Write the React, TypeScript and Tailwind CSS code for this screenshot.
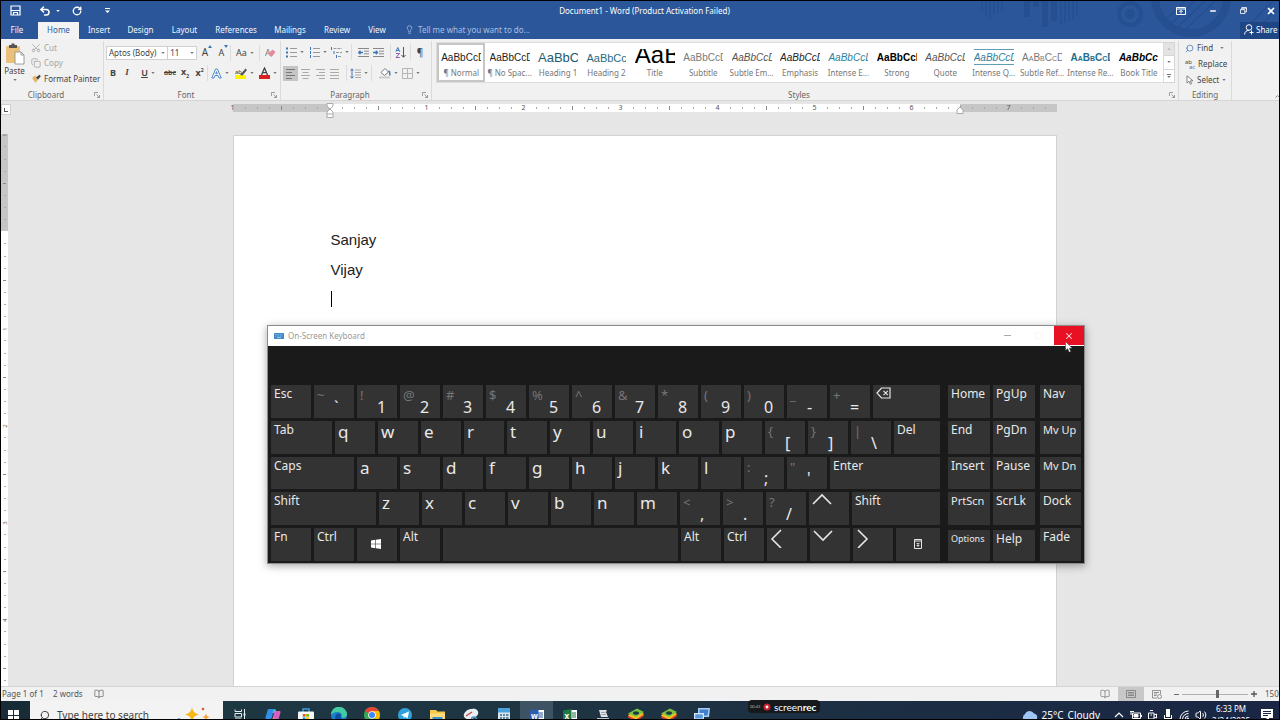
import React from "react";
import clsx from "clsx";
import {
  Search,
  Undo2,
  RotateCw,
  Lightbulb,
  X,
  Minus,
  ChevronUp,
  Scissors,
  Copy,
  Volume2,
  BookOpen,
} from "lucide-react";

const tabs = [
  { name: "File", width: "w-[32px]" },
  { name: "Home", width: "w-[41px]" },
  { name: "Insert", width: "w-[40px]" },
  { name: "Design", width: "w-[43px]" },
  { name: "Layout", width: "w-[45px]" },
  { name: "References", width: "w-[58px]" },
  { name: "Mailings", width: "w-[50px]" },
  { name: "Review", width: "w-[44px]" },
  { name: "View", width: "w-[36px]" },
];

const styleCards = [
  { name: "¶ Normal", look: "text-[10px] leading-[14px] text-[#222]" },
  { name: "¶ No Spac...", look: "text-[10px] leading-[14px] text-[#222]" },
  { name: "Heading 1", look: "text-[13px] leading-[14px] text-[#1f5a70]" },
  { name: "Heading 2", look: "text-[11px] leading-[14px] text-[#2a6a82]" },
  { name: "Title", look: "text-[24px] leading-2 text-black" },
  { name: "Subtitle", look: "text-[10px] leading-[14px] text-[#7a7a7a]" },
  { name: "Subtle Em...", look: "text-[10px] leading-[14px] italic text-[#555]" },
  { name: "Emphasis", look: "text-[10px] leading-[14px] italic text-[#222]" },
  { name: "Intense E...", look: "text-[10px] leading-[14px] italic text-[#2f7d9e]" },
  { name: "Strong", look: "text-[10px] leading-[14px] font-bold text-black" },
  { name: "Quote", look: "text-[10px] leading-[14px] italic text-[#555]" },
  { name: "Intense Q...", look: "text-[10px] leading-[12px] italic text-[#2f7d9e] border-y border-[#5f9db6]" },
  { name: "Subtle Ref...", look: "text-[10px] leading-[14px] text-[#777] [font-variant:small-caps]" },
  { name: "Intense Re...", look: "text-[10px] leading-[14px] font-bold text-[#1f6f8f] [font-variant:small-caps]" },
  { name: "Book Title", look: "text-[10px] leading-[14px] font-bold italic text-black" },
];

type KeyDef = {
  label?: string;
  upper?: string;
  kind?: "letter" | "word" | "small" | "tiny" | "icon";
  width?: string;
  icon?: React.ReactNode;
  name?: string;
};

const letters = (s: string): KeyDef[] => s.split("").map((c) => ({ label: c, kind: "letter" }));
const duals = (pairs: string[]): KeyDef[] => pairs.map((p) => ({ upper: p[0], label: p[1] }));

const arrow = (d: string) => (
  <svg viewBox="0 0 20 20" className="size-5" fill="none" stroke="#e6e6e6" strokeWidth="1.6">
    <path d={d} />
  </svg>
);

const mainRows: KeyDef[][] = [
  [
    { label: "Esc", kind: "word" },
    ...duals(["~`", "!1", "@2", "#3", "$4", "%5", "^6", "&7", "*8", "(9", ")0", "_-", "+="]),
    {
      kind: "icon",
      name: "Backspace",
      width: "flex-1",
      icon: (
        <svg viewBox="0 0 16 14" className="mt-px h-3.5 w-4" fill="none" stroke="#e6e6e6" strokeWidth="1.2">
          <path d="M1 7 L5.5 2 H14 V12 H5.5 Z M7.5 4.8 L11.8 9.2 M11.8 4.8 L7.5 9.2" />
        </svg>
      ),
    },
  ],
  [
    { label: "Tab", kind: "word", width: "w-[61px]" },
    ...letters("qwertyuiop"),
    ...duals(["{[", "}]", "|\\"]),
    { label: "Del", kind: "word", width: "flex-1" },
  ],
  [
    { label: "Caps", kind: "word", width: "w-[83px]" },
    ...letters("asdfghjkl"),
    ...duals([":;", "\"'"]),
    { label: "Enter", kind: "word", width: "flex-1" },
  ],
  [
    { label: "Shift", kind: "word", width: "w-[105px]" },
    ...letters("zxcvbnm"),
    ...duals(["<,", ">.", "?/"]),
    { kind: "icon", name: "Up", icon: arrow("M1 12 L10 3 L19 12") },
    { label: "Shift", kind: "word", width: "flex-1" },
  ],
  [
    { label: "Fn", kind: "word" },
    { label: "Ctrl", kind: "word" },
    {
      kind: "icon",
      name: "Windows",
      icon: (
        <svg viewBox="0 0 10 10" className="mt-[11px] ml-[11px] size-2.5" fill="#fff">
          <path d="M0 1.4 L4.4 .8 V4.7 H0 Z M5 .7 L10 0 V4.7 H5 Z M0 5.3 H4.4 V9.2 L0 8.6 Z M5 5.3 H10 V10 L5 9.3 Z" />
        </svg>
      ),
    },
    { label: "Alt", kind: "word" },
    { kind: "icon", name: "Space", width: "flex-1" },
    { label: "Alt", kind: "word" },
    { label: "Ctrl", kind: "word" },
    { kind: "icon", name: "Left", icon: arrow("M11 2 L2 11 L11 20") },
    { kind: "icon", name: "Down", icon: arrow("M1 3 L10 12 L19 3") },
    { kind: "icon", name: "Right", icon: arrow("M2 2 L11 11 L2 20") },
    {
      kind: "icon",
      name: "Menu",
      width: "w-11",
      icon: (
        <svg viewBox="0 0 8 10" className="mt-[11px] ml-[15px] h-2.5 w-2" fill="none" stroke="#e6e6e6">
          <path d="M.5 .5 H7.5 V9.5 H.5 Z M0 2 H8" />
          <path d="M2.5 4.5 H5.5 M2.5 6.5 H5.5 M4 4.5 V8" strokeWidth=".8" />
        </svg>
      ),
    },
  ],
];

const sideKeys: KeyDef[][] = [
  [{ label: "Home" }, { label: "PgUp" }, { label: "Nav" }],
  [{ label: "End" }, { label: "PgDn" }, { label: "Mv Up", kind: "small" }],
  [{ label: "Insert" }, { label: "Pause" }, { label: "Mv Dn", kind: "small" }],
  [{ label: "PrtScn", kind: "small" }, { label: "ScrLk" }, { label: "Dock" }],
  [{ label: "Options", kind: "tiny" }, { label: "Help" }, { label: "Fade" }],
];

function Key({ label, upper, kind, width = "w-10", icon, name }: KeyDef) {
  return (
    <button
      aria-label={name}
      className={clsx("flex h-full shrink-0 items-start bg-[#333] pl-[3px] text-left text-[#e9e9e9] leading-4", width)}
    >
      {upper ? (
        <>
          <span className="w-[17px] pt-0.5 text-[13px] text-[#757575]">{upper}</span>
          <span className="self-end pb-[3px] text-base leading-4">{label}</span>
        </>
      ) : kind === "letter" ? (
        <span className="pt-[3px] text-[17px] leading-4">{label}</span>
      ) : kind === "icon" ? (
        icon
      ) : (
        <span
          className={clsx(
            "pt-px whitespace-nowrap",
            kind === "small" ? "text-[11px]" : kind === "tiny" ? "pt-0.5 text-[9px]" : "text-[12px]",
          )}
        >
          {label}
        </span>
      )}
    </button>
  );
}

function Keyboard() {
  return (
    <section
      aria-label="On-Screen Keyboard"
      className="absolute top-[325px] left-[267px] w-[818px] border border-[#8c8c8c] bg-[#1a1a1a] shadow-[0_2px_8px_rgba(0,0,0,0.35)]"
    >
      <header className="flex h-5 items-stretch bg-white pb-px">
        <div className="flex flex-1 items-center gap-1 pl-1.5 text-[8px] text-[#9a9a9a]">
          <svg viewBox="0 0 10 6" className="h-1.5 w-2.5">
            <rect width="10" height="6" rx=".5" fill="#3f86c4" />
            <path d="M1 1.5 H9 M1 3 H9" stroke="#9cc9ee" strokeDasharray="1 .6" strokeWidth=".7" />
            <path d="M3 4.6 H7" stroke="#cfe6fa" strokeWidth=".7" />
          </svg>
          <span>On-Screen Keyboard</span>
        </div>
        <button aria-label="Minimize" className="flex w-[31px] items-center justify-center">
          <span className="h-px w-[7px] bg-[#aaa]" />
        </button>
        <button aria-label="Maximize" className="flex w-[31px] items-center justify-center">
          <span className="size-[7px] border border-[#f8f8f8]" />
        </button>
        <button aria-label="Close" className="flex w-[30px] items-center justify-center bg-[#e81123]">
          <X className="size-[10px] text-[#ffd9dc]" strokeWidth={2.5} />
        </button>
      </header>
      <div className="flex h-[217px] gap-2 px-[3px] pt-[39px] pb-0.5">
        <div className="grid flex-1 grid-rows-5 gap-[3px]">
          {mainRows.map((row, i) => (
            <div key={i} className="flex min-h-0 gap-[3px]">
              {row.map((k, j) => (
                <Key key={j} {...k} />
              ))}
            </div>
          ))}
        </div>
        <div className="grid grid-rows-5 gap-[3px]">
          {sideKeys.map((row, i) => (
            <div key={i} className="flex min-h-0 gap-[5px]">
              <div className={clsx("flex gap-[3px]", i === 4 && "pt-0.5")}>
                <Key {...row[0]} width="w-[42px]" />
                <Key {...row[1]} width="w-[42px]" />
              </div>
              <Key {...row[2]} width="w-[41px]" />
            </div>
          ))}
        </div>
      </div>
    </section>
  );
}

function Caret({ className }: { className?: string }) {
  return (
    <svg viewBox="0 0 5 3" className={clsx("h-[2px] w-[4px] shrink-0", className)} fill="#777">
      <path d="M0 0 H5 L2.5 3 Z" />
    </svg>
  );
}

function Divider() {
  return <span className="h-4 w-px shrink-0 bg-[#dcdcdc]" />;
}

// icon button; the width class includes the optional drop-down arrow
function Tool({
  name,
  width,
  caret,
  active,
  children,
}: {
  name: string;
  width: string;
  caret?: boolean;
  active?: boolean;
  children: React.ReactNode;
}) {
  return (
    <button
      aria-label={name}
      className={clsx("flex h-[15px] shrink-0 items-center justify-center gap-[3px]", width, active && "bg-[#c5c5c5]")}
    >
      {children}
      {caret && <Caret />}
    </button>
  );
}

function Glyph({ d, color = "#777" }: { d: string; color?: string }) {
  return (
    <svg viewBox="0 0 11 11" className="size-[11px] shrink-0" fill="none" stroke={color}>
      <path d={d} />
    </svg>
  );
}

function Group({
  title,
  launcher = true,
  className,
  children,
}: {
  title: string;
  launcher?: boolean;
  className?: string;
  children: React.ReactNode;
}) {
  return (
    <section className={clsx("flex flex-col border-r border-[#dadada]", className)}>
      <div className="min-h-0 flex-1">{children}</div>
      <div className="flex h-[11px] items-center text-[#666]">
        <span className="flex-1 text-center leading-[11px]">{title}</span>
        {launcher && (
          <button aria-label={title + " settings"} className="flex w-3 justify-center">
            <svg viewBox="0 0 6 6" className="size-[6px]" fill="none" stroke="#888" strokeWidth=".8">
              <path d="M.5 4 V.5 H4 M2.5 2.5 L5.5 5.5 M5.5 3 V5.5 H3" />
            </svg>
          </button>
        )}
      </div>
    </section>
  );
}

function TitleBar() {
  return (
    <div className="flex h-[21px] items-center pb-0.5 text-white">
      <div className="flex flex-1 items-center pl-[9px]">
        <button aria-label="Save">
          <svg viewBox="0 0 11 11" className="size-[11px]" fill="none" stroke="#fff" strokeWidth="1.2">
            <path d="M1 1 H10 V10 H1 Z M1 5.5 H10 M3.5 10 V7.5 H7.5 V10" />
          </svg>
        </button>
        <button aria-label="Undo" className="ml-[18px] flex items-center gap-[5px]">
          <Undo2 className="size-3" strokeWidth={3} />
          <svg viewBox="0 0 5 3" className="h-[2px] w-[4px]" fill="#fff">
            <path d="M0 0 H5 L2.5 3 Z" />
          </svg>
        </button>
        <button aria-label="Repeat" className="ml-3">
          <RotateCw className="size-[10px]" strokeWidth={3.2} />
        </button>
        <button aria-label="Customize Quick Access Toolbar" className="ml-[23px]">
          <svg viewBox="0 0 5 5" className="size-[5px]" fill="#fff">
            <path d="M0 0 H5 V1 H0 Z M0 2.4 H5 L2.5 5 Z" />
          </svg>
        </button>
      </div>
      <h1 className="text-[8px]">Document1 - Word (Product Activation Failed)</h1>
      <div className="flex flex-1 items-center justify-end">
        <button aria-label="Ribbon Display Options" className="flex w-8 justify-center">
          <svg viewBox="0 0 10 8" className="h-2 w-2.5" fill="none" stroke="#fff">
            <path d="M.5 .5 H9.5 V7.5 H.5 Z M.5 2 H9.5 M5 6.5 V3.5 M3.3 5 L5 3.3 L6.7 5" />
          </svg>
        </button>
        <button aria-label="Minimize" className="flex w-[31px] justify-center">
          <Minus className="size-2" strokeWidth={4} />
        </button>
        <button aria-label="Restore" className="flex w-[31px] justify-center">
          <svg viewBox="0 0 8 8" className="size-[7px]" fill="none" stroke="#fff">
            <path d="M.5 3 H5.5 V7.5 H.5 Z M2 3 V.8 H7.5 V5.5 H5.5 M2 1.3 H7.5" />
          </svg>
        </button>
        <button aria-label="Close" className="flex w-5 justify-center pl-1">
          <X className="size-[10px]" strokeWidth={4} />
        </button>
      </div>
    </div>
  );
}

function Header() {
  return (
    <header className="relative h-[38px] shrink-0 overflow-hidden bg-[#2b579a]">
      <svg viewBox="0 0 300 38" className="absolute top-0 right-0 h-[38px] w-[300px]" fill="none" stroke="#254f90">
        <path d="M3 0 V10 M7 0 V14 M11 0 V18 M15 0 V14 M19 0 V12 M23 0 V10" strokeWidth="1.5" />
        <path d="M48 0 V16 M57 0 V6 M66 0 V26 M75 0 V20" strokeWidth="6" />
        <path d="M82 0 V24 M86 0 V22 M90 0 V20 M94 0 V18 M98 0 V14" strokeWidth="1.5" />
        <circle cx="151" cy="13" r="11" strokeWidth="4" />
        <circle cx="151" cy="13" r="5" fill="#254f90" stroke="none" />
        <circle cx="212" cy="-4" r="36" strokeWidth="8" />
        <path d="M185 20 L206 0 M190 25 L216 0 M196 29 L226 0 M204 31 L236 0 M264 30 L294 0 M272 34 L300 6" strokeWidth="1.5" />
      </svg>
      <div className="relative">
        <TitleBar />
        <nav className="flex h-[17px] items-stretch text-[8px] text-[#f2f6fc]">
          {tabs.map((t) => (
            <button
              key={t.name}
              className={clsx(
                "flex items-center justify-center pb-0.5",
                t.width,
                t.name === "File" && "mr-[5px]",
                t.name === "Home" && "bg-[#f3f3f3] text-[#2b579a]",
              )}
            >
              {t.name}
            </button>
          ))}
          <label className="ml-[10px] flex flex-1 items-center gap-1 pb-0.5 text-[#a9bfe0]">
            <Lightbulb className="size-[9px]" />
            <input
              aria-label="Tell me what you want to do"
              placeholder="Tell me what you want to do..."
              className="w-40 bg-transparent outline-none placeholder:text-[#a9bfe0]"
            />
          </label>
          <button className="flex w-[39px] items-center gap-[2px] bg-[#1e4584] pb-0.5 pl-1 text-white">
            <svg viewBox="0 0 10 11" className="h-[11px] w-2.5 shrink-0" fill="none" stroke="#fff">
              <circle cx="5" cy="3.5" r="2.8" />
              <path d="M.6 10.5 C.8 7.5 2.5 6.5 5 6.4 M7.5 6.5 V10.5 M5.5 8.5 H9.5" />
            </svg>
            Share
          </button>
        </nav>
      </div>
    </header>
  );
}

function Ribbon() {
  return (
    <div className="flex h-[62px] shrink-0 border-b border-[#d5d5d5] bg-[#f1f1f1] pt-[2px] text-[8px] text-[#444]">
      <Group title="Clipboard" className="w-[103px]">
        <div className="flex">
          <button className="flex w-[27px] flex-col items-center pt-0.5">
            <svg viewBox="0 0 20 22" className="h-[22px] w-5">
              <rect x="1" y="3" width="14" height="17" rx="1" fill="#ebc07a" />
              <path d="M4 5 V2 H6.5 V.5 H9.5 V2 H12 V5 Z" fill="#555" />
              <path d="M10 9 H16 L19 12 V21 H10 Z" fill="#fff" stroke="#888" strokeWidth=".8" />
              <path d="M16 9 V12 H19" fill="none" stroke="#888" strokeWidth=".8" />
            </svg>
            <span className="leading-[11px]">Paste</span>
            <Caret className="mt-[3px]" />
          </button>
          <div className="flex flex-col pl-[3px]">
            <button className="flex h-[14px] items-center gap-[3px] text-[#a3a3a3]">
              <Scissors className="size-[10px] -rotate-90" />
              Cut
            </button>
            <button className="flex h-4 items-center gap-[3px] text-[#a3a3a3]">
              <Copy className="size-[10px]" />
              Copy
            </button>
            <button className="flex h-[15px] items-center gap-[3px] whitespace-nowrap">
              <svg viewBox="0 0 10 10" className="size-[10px]">
                <path d="M1 4 L4 1.5 L7.5 5 L4.5 9 Z" fill="#e5b568" />
                <path d="M5 3.5 L8.5 .8 L9.8 2.2 L7 5.5 Z" fill="#444" />
              </svg>
              Format Painter
            </button>
          </div>
        </div>
      </Group>

      <Group title="Font" className="w-[177px]">
        <div className="flex h-[22px] items-center pt-px pl-0.5">
          <div className="flex h-[14px] w-[63px] items-center border border-[#d0d0d0] bg-white px-0.5">
            <input aria-label="Font" defaultValue="Aptos (Body)" className="w-full min-w-0 outline-none" />
            <Caret />
          </div>
          <div className="flex h-[14px] w-[29px] items-center border border-l-0 border-[#d0d0d0] bg-white px-0.5">
            <input aria-label="Font size" defaultValue="11" className="w-full min-w-0 outline-none" />
            <Caret />
          </div>
          <Tool name="Grow Font" width="w-[20px]">
            <span className="text-[10px]">A</span>
            <svg viewBox="0 0 4 3" className="-ml-[3px] h-[3px] w-1 self-start" fill="#3d76b8">
              <path d="M0 3 L2 0 L4 3 Z" />
            </svg>
          </Tool>
          <Tool name="Shrink Font" width="w-[13px]">
            <span className="text-[9px]">A</span>
            <svg viewBox="0 0 4 3" className="-ml-[3px] h-[3px] w-1 self-start" fill="#3d76b8">
              <path d="M0 0 L2 3 L4 0 Z" />
            </svg>
          </Tool>
          <Divider />
          <Tool name="Change Case" width="w-[28px]" caret>
            <span className="text-[9px]">Aa</span>
          </Tool>
          <Divider />
          <Tool name="Clear Formatting" width="w-5">
            <svg viewBox="0 0 11 11" className="size-[11px]">
              <text x="0" y="9" fontSize="9" fill="#777">
                A
              </text>
              <path d="M3 7 L7.5 2.5 L10.5 5 L6.5 10 Z" fill="#e58a9a" />
            </svg>
          </Tool>
        </div>
        <div className="flex h-5 items-center pl-0.5 text-[9px] text-[#444]">
          <Tool name="Bold" width="w-[14px]">
            <b>B</b>
          </Tool>
          <Tool name="Italic" width="w-[14px]">
            <i className="font-['Liberation_Serif',serif] font-bold">I</i>
          </Tool>
          <Tool name="Underline" width="w-[28px]" caret>
            <u className="font-semibold">U</u>
          </Tool>
          <Tool name="Strikethrough" width="w-[16px]">
            <s className="text-[7px] font-semibold">abc</s>
          </Tool>
          <Tool name="Subscript" width="w-[14px]">
            <span className="font-bold">
              x<span className="align-sub text-[5px]">2</span>
            </span>
          </Tool>
          <Tool name="Superscript" width="w-[15px]">
            <span className="font-bold">
              x<span className="align-super text-[5px]">2</span>
            </span>
          </Tool>
          <Divider />
          <Tool name="Text Effects" width="w-[24px]" caret>
            <svg viewBox="0 0 11 11" className="size-[11px]" fill="#fff" stroke="#4a86c8">
              <path d="M.8 10 L4.6 1 H6.4 L10.2 10 H8 L7 7.5 H4 L3 10 Z M4.7 5.8 H6.3 L5.5 3.6 Z" />
            </svg>
          </Tool>
          <Tool name="Highlight" width="w-[24px]" caret>
            <svg viewBox="0 0 12 12" className="size-3">
              <rect y="8" width="11" height="4" fill="#fff200" />
              <path d="M5 8 L10.5 1.5 L12 3 L7.5 8.5 Z" fill="#555" />
              <text x="0" y="7" fontSize="6" fill="#333">
                ab
              </text>
            </svg>
          </Tool>
          <Tool name="Font Color" width="w-[24px]" caret>
            <svg viewBox="0 0 11 12" className="h-3 w-[11px]">
              <path d="M2.5 8 L5.5 1 L8.5 8 M3.6 5.6 H7.4" fill="none" stroke="#444" strokeWidth="1.3" />
              <rect y="8" width="11" height="4" fill="#d8201c" />
            </svg>
          </Tool>
        </div>
      </Group>

      <Group title="Paragraph" className="w-[151px]">
        <div className="flex h-[22px] items-center pl-0.5">
          <Tool name="Bullets" width="w-[23px]" caret>
            <svg viewBox="0 0 11 11" className="size-[11px]" fill="none" stroke="#999">
              <path d="M4 1.5 H11 M4 5.5 H11 M4 9.5 H11" />
              <path d="M0 1.5 H2 M0 5.5 H2 M0 9.5 H2" stroke="#3d76b8" strokeWidth="2" />
            </svg>
          </Tool>
          <Tool name="Numbering" width="w-[23px]" caret>
            <svg viewBox="0 0 11 11" className="size-[11px]" fill="none" stroke="#999">
              <path d="M4 1.5 H11 M4 5.5 H11 M4 9.5 H11" />
              <path d="M1.5 0 V3 M1.5 4 V7 M1.5 8 V11" stroke="#3d76b8" />
            </svg>
          </Tool>
          <Tool name="Multilevel List" width="w-[22px]" caret>
            <svg viewBox="0 0 11 11" className="size-[11px]" fill="none" stroke="#999">
              <path d="M2.5 1.5 H11 M5 5.5 H11 M7 9.5 H11" strokeDasharray="3 1" />
              <path d="M.5 0 V3 M3 4 V7 M5.5 8 V11" stroke="#3d76b8" />
            </svg>
          </Tool>
          <Divider />
          <span className="w-1" />
          <Tool name="Decrease Indent" width="w-[15px]">
            <svg viewBox="0 0 11 11" className="size-[11px]" fill="none" stroke="#888">
              <path d="M0 1.5 H11 M6 4.2 H11 M6 6.8 H11 M0 9.5 H11" />
              <path d="M5 5.5 H1 M2.5 3.8 L.8 5.5 L2.5 7.2" stroke="#3d76b8" strokeWidth="1.4" />
            </svg>
          </Tool>
          <Tool name="Increase Indent" width="w-[15px]">
            <svg viewBox="0 0 11 11" className="size-[11px]" fill="none" stroke="#888">
              <path d="M0 1.5 H11 M6 4.2 H11 M6 6.8 H11 M0 9.5 H11" />
              <path d="M0 5.5 H4 M2.8 3.8 L4.5 5.5 L2.8 7.2" stroke="#3d76b8" strokeWidth="1.4" />
            </svg>
          </Tool>
          <span className="w-1" />
          <Divider />
          <Tool name="Sort" width="w-[19px]">
            <svg viewBox="0 0 11 11" className="size-[11px]" fill="none">
              <path d="M.8 4.8 L2.8 .5 L4.8 4.8 M1.5 3.4 H4" stroke="#3d76b8" />
              <path d="M1 6.5 H4.5 L1 10.5 H4.8" stroke="#8a5aa8" />
              <path d="M8.5 0 V10 M6.5 8 L8.5 10.3 L10.5 8" stroke="#555" />
            </svg>
          </Tool>
          <Divider />
          <Tool name="Show Paragraph Marks" width="w-[18px]">
            <span className="text-[10px]">¶</span>
          </Tool>
        </div>
        <div className="flex h-5 items-center pl-0.5">
          <Tool name="Align Left" width="w-[15px]" active>
            <Glyph d="M1 1.5 H10 M1 4.5 H7 M1 7.5 H10 M1 10.5 H7" />
          </Tool>
          <Tool name="Center" width="w-[15px]">
            <Glyph d="M1 1.5 H10 M2.5 4.5 H8.5 M1 7.5 H10 M2.5 10.5 H8.5" color="#aaa" />
          </Tool>
          <Tool name="Align Right" width="w-[14px]">
            <Glyph d="M1 1.5 H10 M4 4.5 H10 M1 7.5 H10 M4 10.5 H10" color="#aaa" />
          </Tool>
          <Tool name="Justify" width="w-[15px]">
            <Glyph d="M1 1.5 H10 M1 4.5 H10 M1 7.5 H10 M1 10.5 H10" color="#aaa" />
          </Tool>
          <span className="w-1" />
          <Divider />
          <Tool name="Line Spacing" width="w-[24px]" caret>
            <svg viewBox="0 0 11 11" className="size-[11px]" fill="none" stroke="#aaa">
              <path d="M5 2 H11 M5 4.5 H11 M5 7 H11 M5 9.5 H11" />
              <path d="M2 1 V10 M.5 2.5 L2 .8 L3.5 2.5 M.5 8.5 L2 10.2 L3.5 8.5" stroke="#3d76b8" />
            </svg>
          </Tool>
          <Divider />
          <span className="w-1.5" />
          <Tool name="Shading" width="w-[21px]" caret>
            <svg viewBox="0 0 12 12" className="size-3" fill="none">
              <path d="M2 5.5 L6 1.5 L9.5 5 L5.5 8.5 Z" stroke="#777" fill="#fff" />
              <path d="M9.5 4 C11.5 5 11 7 10.8 8.5" stroke="#3d76b8" strokeWidth="1.4" />
              <path d="M0 10.5 H11" stroke="#ccc" strokeWidth="2" />
            </svg>
          </Tool>
          <Tool name="Borders" width="w-[24px]" caret>
            <Glyph d="M.5 .5 H10.5 V10.5 H.5 Z M5.5 .5 V10.5 M.5 5.5 H10.5" color="#b5b5b5" />
          </Tool>
        </div>
      </Group>

      <Group title="Styles" className="min-w-0 flex-1">
        <div className="flex h-[42px] pt-px pr-[3px] pl-1">
          <div className="flex min-w-0 flex-1 border border-[#dcdcdc] bg-white">
            {styleCards.map((s, i) => (
              <button
                key={s.name}
                className={clsx(
                  "flex min-w-0 flex-1 flex-col items-center border-2 px-0.5 pt-1",
                  i === 0 ? "border-[#c6c6c6]" : "border-transparent",
                )}
              >
                <span className="flex h-[18px] w-10 shrink-0 items-start overflow-hidden font-['Liberation_Sans',sans-serif]">
                  <span className={clsx("w-full pt-0.5 text-left", s.look)}>
                    {s.name === "Title" ? "AaB" : s.name === "Heading 1" ? "AaBbC" : s.name === "Book Title" || s.name === "Heading 2" ? "AaBbCc" : "AaBbCcD"}
                  </span>
                </span>
                <span className="leading-3 whitespace-nowrap text-[#777]">{s.name}</span>
              </button>
            ))}
          </div>
          <div className="flex w-[11px] flex-col">
            <button aria-label="Previous row" className="flex flex-1 items-center justify-center border border-l-0 border-[#d5d5d5] bg-[#e3e3e3]">
              <Caret className="rotate-180 opacity-40" />
            </button>
            <button aria-label="Next row" className="flex flex-1 items-center justify-center border-r border-[#d5d5d5] bg-white">
              <Caret />
            </button>
            <button aria-label="More styles" className="flex flex-1 flex-col items-center justify-center gap-px border border-l-0 border-[#d5d5d5] bg-white">
              <span className="h-px w-1 bg-[#777]" />
              <Caret />
            </button>
          </div>
        </div>
      </Group>

      <Group title="Editing" launcher={false} className="w-[53px]">
        <div className="flex flex-col pt-px pl-1.5">
          <button className="flex h-3 items-center gap-[3px]">
            <Search className="size-[9px] -scale-x-100 text-[#3d76b8]" />
            Find
            <Caret className="ml-1" />
          </button>
          <button className="mt-1 flex h-3 items-center gap-[2px]">
            <svg viewBox="0 0 11 10" className="h-2.5 w-[11px] shrink-0">
              <text x="0" y="5" fontSize="6" fill="#444">
                ab
              </text>
              <text x="4" y="10" fontSize="6" fill="#3d76b8">
                ac
              </text>
            </svg>
            Replace
          </button>
          <button className="mt-1 flex h-3 items-center gap-[3px]">
            <svg viewBox="0 0 9 10" className="h-2.5 w-[9px]" fill="#fff" stroke="#777" strokeWidth=".9">
              <path d="M2 .8 V8 L4 6.2 L5.4 9.2 L6.6 8.6 L5.4 5.8 H8 Z" />
            </svg>
            Select
            <Caret />
          </button>
        </div>
      </Group>
      <div className="flex w-[47px] items-end justify-end">
        <button aria-label="Collapse the Ribbon">
          <ChevronUp className="-mr-0.5 size-[7px]" />
        </button>
      </div>
    </div>
  );
}

function HorizontalRuler() {
  return (
    <div className="relative flex h-2 w-[824px] text-[7px] leading-2 text-[#555]">
      {Array.from({ length: 68 }, (_, i) => (
        <span key={i} className={clsx("flex flex-1 items-center", i < 8 || i >= 60 ? "bg-[#c6c6c6]" : "bg-white")}>
          {i % 8 === 0 && i !== 8 ? (
            <span className="-ml-0.5">{Math.abs(i / 8 - 1)}</span>
          ) : i === 8 ? null : (
            <span className={clsx("w-px", i % 4 === 0 ? "h-1 bg-[#888]" : "h-[2px] bg-[#aaa]")} />
          )}
        </span>
      ))}
      <svg viewBox="0 0 8 15" className="absolute -top-px left-[93px] h-[15px] w-2" fill="#fff" stroke="#aaa">
        <path d="M1 .5 H7 V3 L4 6 L1 3 Z M4 6 L7 9 V14.5 H1 V9 Z M1 11 H7" />
      </svg>
      <svg viewBox="0 0 8 8" className="absolute top-0.5 right-[93px] size-2" fill="#fff" stroke="#aaa">
        <path d="M4 1 L7 4 V7.5 H1 V4 Z" />
      </svg>
    </div>
  );
}

function VerticalRuler() {
  return (
    <div className="mt-[19px] flex min-h-0 w-[7px] flex-1 flex-col overflow-hidden text-[6px] text-[#555]">
      {Array.from({ length: 46 }, (_, i) => (
        <span
          key={i}
          className={clsx("flex shrink-0 items-start justify-center", i % 8 === 1 ? "h-[13px]" : "h-3", i < 8 ? "bg-[#c6c6c6]" : "bg-white")}
        >
          {i % 8 === 0 && i !== 8 ? (
            <span className="-mt-0.5 -rotate-90 leading-[6px]">{Math.abs(i / 8 - 1)}</span>
          ) : i === 8 ? null : (
            <span className={clsx("h-px", i % 4 === 0 ? "w-[3px] bg-[#888]" : "w-[2px] bg-[#aaa]")} />
          )}
        </span>
      ))}
    </div>
  );
}

function Workspace() {
  return (
    <main className="flex min-h-0 flex-1 bg-[#e6e6e6]">
      <div className="flex w-[9px] shrink-0 flex-col pt-[3px]">
        <button
          aria-label="Tab selector"
          className="flex h-[11px] w-[10px] shrink-0 items-center justify-center border border-[#d0d0d0] bg-white"
        >
          <span className="size-1 border-b border-l border-[#555]" />
        </button>
        <VerticalRuler />
      </div>
      <div className="flex min-w-0 flex-1 flex-col items-center pt-[3px]">
        <HorizontalRuler />
        <article className="mt-[23px] w-[824px] flex-1 border border-b-0 border-[#d2d2d2] bg-white pt-[89px] pl-[97px] font-['Liberation_Sans',sans-serif] text-[15px] leading-[30px] text-[#222]">
          <p>Sanjay</p>
          <p>Vijay</p>
          <p className="flex h-[28px] items-center">
            <span className="h-4 w-px bg-black" />
          </p>
        </article>
      </div>
    </main>
  );
}

function StatusBar() {
  return (
    <footer className="flex h-[15px] shrink-0 items-center overflow-hidden border-t border-[#d5d5d5] bg-[#f1f1f1] text-[8px] whitespace-nowrap text-[#555]">
      <span className="w-[52px] pl-px">Page 1 of 1</span>
      <span className="w-[41px]">2 words</span>
      <BookOpen className="size-[10px] text-[#777]" />
      <span className="flex-1" />
      <button aria-label="Read Mode" className="flex w-[26px] justify-center">
        <BookOpen className="size-[10px] text-[#888]" />
      </button>
      <button aria-label="Print Layout" className="flex h-full w-[26px] items-center justify-center bg-[#c8c8c8]">
        <svg viewBox="0 0 10 8" className="h-2 w-2.5" fill="none" stroke="#888">
          <path d="M.5 .5 H9.5 V7.5 H.5 Z M2 2.5 H8 M2 4 H8 M2 5.5 H8" />
        </svg>
      </button>
      <button aria-label="Web Layout" className="flex w-[26px] justify-center">
        <svg viewBox="0 0 10 9" className="h-[9px] w-2.5" fill="none" stroke="#888" strokeWidth=".9">
          <path d="M5 8 H.5 V.5 H8.5 V4 M2 2.5 H7 M2 4 H5 M2 5.5 H4.5" />
          <circle cx="7.5" cy="6.5" r="2" />
        </svg>
      </button>
      <button aria-label="Zoom out" className="flex w-3 justify-center">
        <Minus className="size-[7px]" strokeWidth={3} />
      </button>
      <input
        type="range"
        aria-label="Zoom"
        min={0}
        max={100}
        defaultValue={54}
        className="h-[9px] w-[66px] appearance-none bg-[linear-gradient(#b0b0b0,#b0b0b0)] bg-size-[100%_1px] bg-center bg-no-repeat [&::-webkit-slider-thumb]:h-[8px] [&::-webkit-slider-thumb]:w-[3px] [&::-webkit-slider-thumb]:appearance-none [&::-webkit-slider-thumb]:bg-[#666]"
      />
      <button aria-label="Zoom in" className="flex w-3 justify-center">
        <svg viewBox="0 0 6 6" className="size-1.5" stroke="#555" strokeWidth="1.3">
          <path d="M3 0 V6 M0 3 H6" />
        </svg>
      </button>
      <span className="w-[19px] overflow-hidden pl-[5px]">150%</span>
    </footer>
  );
}

function StackIcon() {
  return (
    <svg viewBox="0 0 18 14" className="h-3.5 w-[18px]">
      <path d="M1 9.5 L9 13.5 L17 8 L16 5 H2 Z" fill="#e0402e" />
      <path d="M1 7.5 L9 11.5 L17 6 L10 2 Z" fill="#f3c51f" />
      <path d="M1 5.5 L9 9 L17 4 L10 .5 Z" fill="#7cc242" />
      <ellipse cx="9" cy="5" rx="3" ry="1.8" fill="#1f3a44" />
    </svg>
  );
}

const taskIcons = [
  {
    name: "Task View",
    icon: (
      <svg viewBox="0 0 12 12" className="size-3" fill="none" stroke="#e6eef0">
        <path d="M1 .5 V2.5 H7.5 V.5 M1 4.5 H7.5 V8 H1 Z M1 12 V10 H7.5 V12 M10.5 0 V12" />
        <path d="M9.5 5.5 H11.5" strokeWidth="2" />
      </svg>
    ),
  },
  {
    name: "Copilot",
    icon: (
      <svg viewBox="0 0 16 14" className="h-3.5 w-4">
        <path d="M4 1 H9 L7 9 C6.5 11 5.5 11 4 11 H1.5 C.5 11 .3 10 .6 9 L2.5 2.5 C2.8 1.5 3.2 1 4 1 Z" fill="#2f8fe8" />
        <path d="M9 1 C10.5 1 11 2 11 3 L10 5 H7.5 Z" fill="#3fd0c0" />
        <path d="M12 3 H14.5 C15.5 3 15.7 4 15.4 5 L13.5 11.5 C13.2 12.5 12.8 13 12 13 H7 L9 5 C9.5 3 10.5 3 12 3 Z" fill="#d65fc0" />
        <path d="M7 13 L8.2 8.5 L11 13 Z" fill="#f28a4a" />
      </svg>
    ),
  },
  {
    name: "Microsoft Store",
    icon: (
      <svg viewBox="0 0 16 15" className="h-[15px] w-4">
        <path d="M5 4 V1 H11 V4" fill="none" stroke="#3aa0e8" strokeWidth="1.4" />
        <rect y="3.5" width="16" height="11.5" rx="1" fill="#f4f6f8" />
        <path d="M4.8 6 H7.5 V8.7 H4.8 Z" fill="#f25022" />
        <path d="M8.2 6 H11 V8.7 H8.2 Z" fill="#7fba00" />
        <path d="M4.8 9.4 H7.5 V12 H4.8 Z" fill="#00a4ef" />
        <path d="M8.2 9.4 H11 V12 H8.2 Z" fill="#ffb900" />
      </svg>
    ),
  },
  {
    name: "Edge",
    icon: (
      <svg viewBox="0 0 16 16" className="size-4">
        <circle cx="8" cy="8" r="8" fill="#1b7fd0" />
        <path d="M0 8 A8 8 0 0 1 16 7.5 C16 10 13.5 11 10.5 10.5 C12 7 9 5 6.5 5 C3.5 5 .8 6.5 0 8 Z" fill="#45cba0" />
        <path d="M4 11 C4 7.5 6 6 8.5 6.5 C10 7.3 10 9 9.5 10 C9.5 12 12 13 14.5 12 A8 8 0 0 1 4 11 Z" fill="#0d4f9e" />
      </svg>
    ),
  },
  {
    name: "Chrome",
    icon: (
      <svg viewBox="0 0 16 16" className="size-4">
        <circle cx="8" cy="8" r="8" fill="#34a853" />
        <path d="M8 8 L1.1 4 A8 8 0 0 1 14.9 4 Z" fill="#ea4335" />
        <path d="M8 4 H14.9 A8 8 0 0 1 8 16 L11.5 10 Z" fill="#fbbc05" />
        <circle cx="8" cy="8" r="3.8" fill="#fff" />
        <circle cx="8" cy="8" r="3" fill="#4285f4" />
      </svg>
    ),
  },
  {
    name: "Telegram",
    icon: (
      <svg viewBox="0 0 14 14" className="size-3.5">
        <circle cx="7" cy="7" r="7" fill="#2fa3dc" />
        <path d="M2.8 6.9 L11 3.6 L9.6 10.6 L7 8.8 L5.7 10 L5.5 8 Z" fill="#fff" />
      </svg>
    ),
  },
  {
    name: "File Explorer",
    icon: (
      <svg viewBox="0 0 15 13" className="h-[13px] w-[15px]">
        <path d="M0 1 H6 L7.5 2.5 H15 V13 H0 Z" fill="#f7c948" />
        <path d="M0 4.5 H15 V13 H0 Z" fill="#fbdc7b" />
        <path d="M3.5 13 V9 H11.5 V13" fill="none" stroke="#3a8fd0" strokeWidth="2" />
      </svg>
    ),
  },
  {
    name: "Snipping Tool",
    icon: (
      <svg viewBox="0 0 16 15" className="h-[15px] w-4">
        <ellipse cx="8" cy="6" rx="7.5" ry="5" fill="#e9eef2" transform="rotate(-20 8 6)" />
        <path d="M3 8 L9 4" fill="none" stroke="#c9464a" strokeWidth="1.4" />
        <circle cx="11" cy="11.5" r="2.5" fill="none" stroke="#4a90c8" strokeWidth="1.5" />
      </svg>
    ),
  },
  {
    name: "Calculator",
    icon: (
      <svg viewBox="0 0 12 14" className="h-3.5 w-3">
        <rect width="12" height="14" fill="#d9e6ee" />
        <rect x="0" y="0" width="12" height="4.5" fill="#4aa3dc" />
        <path d="M2 7 H4 M5 7 H7 M8 7 H10.5 M2 10 H4 M5 10 H7 M8 10 H10.5" stroke="#3a6b8c" strokeWidth="1.6" />
      </svg>
    ),
  },
  {
    name: "Word",
    icon: (
      <svg viewBox="0 0 14 13" className="h-[13px] w-3.5">
        <rect x="6" y="1" width="8" height="11" fill="#fff" />
        <path d="M8 4 H13 M8 6 H13 M8 8 H13" stroke="#2b579a" />
        <path d="M0 1.5 L8.5 0 V13 L0 11.5 Z" fill="#2a5db0" />
        <text x="1" y="9.5" fontSize="8" fontWeight="700" fill="#fff">
          w
        </text>
      </svg>
    ),
  },
  {
    name: "Excel",
    icon: (
      <svg viewBox="0 0 14 13" className="h-[13px] w-3.5">
        <rect x="6" y="1" width="8" height="11" fill="#fff" />
        <path d="M9 4 H13 M9 6 H13 M9 8 H13" stroke="#217346" />
        <path d="M0 1.5 L8.5 0 V13 L0 11.5 Z" fill="#1e7a45" />
        <text x="1.5" y="9.5" fontSize="8" fontWeight="700" fill="#fff">
          x
        </text>
      </svg>
    ),
  },
  {
    name: "Scanner",
    icon: (
      <svg viewBox="0 0 14 13" className="h-[13px] w-3.5">
        <path d="M3 1 H11 L10 3 L12 8 H5 Z" fill="#dfe3e5" />
        <path d="M1 9 H13 V12 H1 Z" fill="#bfc6ca" />
        <path d="M5 3.5 H9.5 M5.5 5.5 H10" stroke="#8a9499" strokeWidth=".8" />
      </svg>
    ),
  },
  { name: "BlueStacks", icon: <StackIcon /> },
  { name: "BlueStacks Manager", icon: <StackIcon /> },
  {
    name: "Remote Desktop",
    icon: (
      <svg viewBox="0 0 16 14" className="h-3.5 w-4">
        <path d="M4 0 H16 L15 9 H4 Z" fill="#a9cdf0" />
        <path d="M5.5 1.5 H14.3 L13.6 7.5 H5.5 Z" fill="#3f7fd0" />
        <path d="M0 5 H10 V12 H0 Z" fill="#d5e6f7" />
        <path d="M1.2 6.3 H8.8 V10.5 H1.2 Z" fill="#5a96dc" />
      </svg>
    ),
  },
];

function Taskbar() {
  return (
    <footer className="relative h-[18px] shrink-0 bg-[linear-gradient(90deg,#1d3a42,#1e3442_45%,#1a2644)]">
      <div className="h-[18px] overflow-hidden">
        <div className="flex h-7 items-center text-white">
          <button aria-label="Start" className="flex h-full w-[29px] items-center bg-[#172c36] pl-[7px]">
            <svg viewBox="0 0 11 11" className="size-[11px]" fill="#fff">
              <path d="M0 0 H5 V5 H0 Z M6 0 H11 V5 H6 Z M0 6 H5 V11 H0 Z M6 6 H11 V11 H6 Z" />
            </svg>
          </button>
          <label className="flex h-full w-[193px] items-center bg-[#f3f3f3] pl-[9px] text-[#333]">
            <Search className="size-[11px] -scale-x-100" />
            <input
              aria-label="Search"
              placeholder="Type here to search"
              className="ml-[7px] w-[116px] bg-transparent text-[10px] outline-none placeholder:text-[#444]"
            />
            <svg viewBox="0 0 34 16" className="ml-1 h-4 w-[34px]">
              <path d="M15 0 C16 5 18 6.5 22 7.5 C18 8.5 16 10 15 15 C14 10 12 8.5 8 7.5 C12 6.5 14 5 15 0 Z" fill="#f6b81a" />
              <path d="M29 6 C29.5 9 30.5 9.5 33 10 C30.5 10.5 29.5 11 29 14 C28.5 11 27.5 10.5 25 10 C27.5 9.5 28.5 9 29 6 Z" fill="#f4a63a" />
              <circle cx="26" cy="2" r="1.3" fill="#e0563c" />
              <circle cx="2" cy="13" r="1.8" fill="#2f7fd0" />
            </svg>
          </label>
          {taskIcons.map((t) => (
            <button
              key={t.name}
              aria-label={t.name}
              className={clsx("flex h-full w-[33px] items-center justify-center", t.name === "Word" && "bg-[#3d5363]")}
            >
              {t.icon}
            </button>
          ))}
          <span className="flex-1" />
          <button className="flex items-center gap-1 text-[10px] whitespace-nowrap">
            <svg viewBox="0 0 17 12" className="h-3 w-[17px]">
              <path d="M4 12 A4 4 0 0 1 4 5 A5 5 0 0 1 13 4.5 A3.8 3.8 0 0 1 13 12 Z" fill="#9fc5f5" />
            </svg>
            <span>25°C</span>
            <span>Cloudy</span>
          </button>
          <div className="ml-3.5 flex items-center gap-1.5">
            <button aria-label="Show hidden icons">
              <svg viewBox="0 0 10 6" className="h-1.5 w-2.5" fill="none" stroke="#fff" strokeWidth="1.2">
                <path d="M1 5 L5 1 L9 5" />
              </svg>
            </button>
            <svg viewBox="0 0 12 8" className="h-2 w-3" fill="none" stroke="#fff">
              <path d="M2.5 2 H10.5 V7.5 H2.5 Z M11.5 4 V6 M0 .5 H4 M1 0 V4" />
              <path d="M4 3.5 H8 V6 H4 Z" fill="#fff" />
            </svg>
            <svg viewBox="0 0 9 10" className="h-2.5 w-[9px]" fill="none" stroke="#fff">
              <path d="M2 .5 H5 M.5 3 H6 V9 H.5 Z M6 5 L8.5 4 V8 L6 7 M2.5 5 H4" />
            </svg>
            <svg viewBox="0 0 8 12" className="ml-px h-3 w-2" fill="#fff">
              <path d="M2 0 H6 V8 H2 Z M0 6 H1 V9 H7 V6 H8 V10 H4.5 V12 H3.5 V10 H0 Z" />
            </svg>
            <svg viewBox="0 0 10 10" className="ml-px size-2.5" fill="none" stroke="#fff">
              <path d="M1 9.5 A8.5 8.5 0 0 1 9.5 1 M3.5 9.5 A6 6 0 0 1 9.5 3.5 M6 9.5 A3.5 3.5 0 0 1 9.5 6" />
              <circle cx="8.8" cy="8.8" r=".8" fill="#fff" />
            </svg>
            <Volume2 className="size-3" />
          </div>
          <div className="flex h-full w-12 flex-col items-center pt-0.5 text-[8px] leading-3 whitespace-nowrap">
            <span>6:33 PM</span>
            <span>2/24/2025</span>
          </div>
          <button aria-label="Notifications" className="mr-1.5 ml-1.5">
            <svg viewBox="0 0 12 12" className="size-3">
              <path d="M0 0 H12 V9 H8 V12 L5 9 H0 Z" fill="#fff" />
              <path d="M2 2.5 H10 M2 4.5 H10 M2 6.5 H7" stroke="#1a2644" />
            </svg>
          </button>
        </div>
      </div>
      <div className="absolute -top-px left-[747px] flex h-[13px] w-[72px] items-center rounded-sm bg-[#15191c] pl-0.5 font-['Lato',sans-serif] text-[10px] leading-none text-white">
        <span className="w-[13px] text-[4px] text-[#bbb]">00:43</span>
        <svg viewBox="0 0 8 8" className="mr-[3px] size-2 shrink-0">
          <circle cx="4" cy="4" r="3.6" fill="#c9202e" />
          <circle cx="4" cy="4" r="1.4" fill="#fff" />
        </svg>
        screen<b>rec</b>
      </div>
    </footer>
  );
}

export default function App() {
  return (
    <div className="relative h-screen min-h-[600px] overflow-hidden bg-black p-px font-['Noto_Sans',sans-serif]">
      <div className="flex h-full flex-col">
        <Header />
        <Ribbon />
        <Workspace />
        <StatusBar />
        <Taskbar />
      </div>
      <Keyboard />
      {/* mouse pointer */}
      <svg viewBox="0 0 8 12" className="absolute top-[341px] left-[1065px] h-3 w-2" fill="#fff" stroke="#333" strokeWidth=".5">
        <path d="M.5 .5 V9.5 L2.6 7.7 L4.2 11.3 L5.8 10.6 L4.3 7.2 H7.3 Z" />
      </svg>
    </div>
  );
}
